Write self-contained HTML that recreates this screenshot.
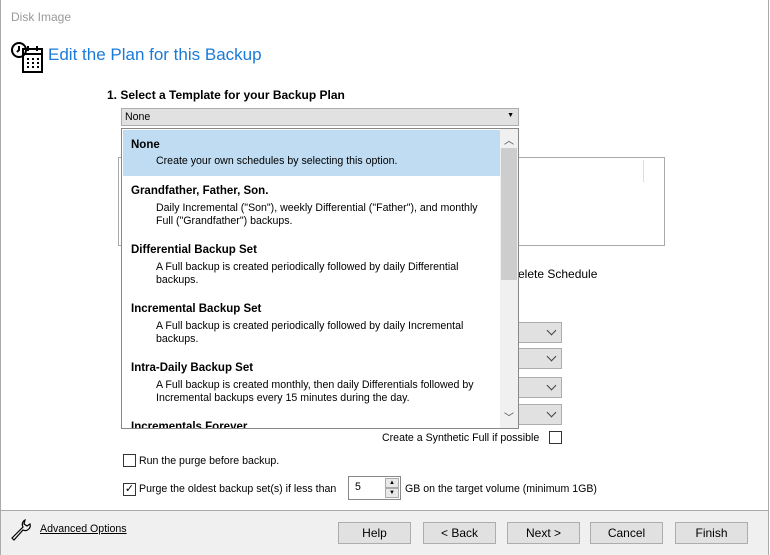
<!DOCTYPE html>
<html><head><style>
*{margin:0;padding:0;box-sizing:border-box}
body{width:770px;height:555px;background:#fff;font-family:"Liberation Sans",sans-serif;font-size:10.6px;color:#000;position:relative;overflow:hidden}
.a{position:absolute;white-space:nowrap}
.cb{position:absolute;background:#e1e1e1;border:1px solid #adadad}
.chev{position:absolute;right:6px;top:4px;width:7px;height:7px;border-right:1px solid #444;border-bottom:1px solid #444;transform:rotate(45deg)}
.btn{position:absolute;top:522px;width:73px;height:22px;background:#e1e1e1;border:1px solid #adadad;text-align:center;line-height:20px;font-size:12px}
.chk{position:absolute;width:13px;height:13px;border:1px solid #333;background:#fff}
.t{font-weight:bold;font-size:11.5px}
</style></head><body>
<div class="a" style="left:0;top:0;width:1px;height:555px;background:#aaa"></div>
<div class="a" style="left:768px;top:0;width:1px;height:555px;background:#aaa"></div>
<div class="a" style="left:11px;top:10px;color:#999;font-size:12px">Disk Image</div>
<svg class="a" style="left:10px;top:40px" width="34" height="34" viewBox="0 0 34 34" fill="none" stroke="#000" stroke-width="2"><circle cx="9" cy="10" r="7"/><path d="M9 6v4l-2 2"/><rect x="13" y="9" width="19" height="23"/><path d="M13 14h19M18 6v5M27 6v5"/><path d="M17 19h2M22 19h2M27 19h2M17 23h2M22 23h2M27 23h2M17 27h2M22 27h2M27 27h2"/></svg>
<div class="a" style="left:48px;top:45px;font-size:17px;color:#1a7ad8">Edit the Plan for this Backup</div>
<div class="a" style="left:107px;top:88px;font-weight:bold;font-size:12px">1. Select a Template for your Backup Plan</div>
<div class="cb" style="left:121px;top:108px;width:398px;height:18px"><span class="a" style="left:3px;top:2px">None</span><span class="a" style="right:4px;top:3px;font-size:7px">▼</span></div>
<div class="a" style="left:118px;top:157px;width:547px;height:89px;border:1px solid #aaa"></div>
<div class="a" style="left:643px;top:160px;width:1px;height:22px;background:#ddd"></div>
<div class="a" style="left:518px;top:267px;font-size:12px">elete Schedule</div>
<div class="cb" style="left:515px;top:322px;width:47px;height:21px"><div class="chev"></div></div>
<div class="cb" style="left:515px;top:348px;width:47px;height:21px"><div class="chev"></div></div>
<div class="cb" style="left:515px;top:377px;width:47px;height:21px"><div class="chev"></div></div>
<div class="cb" style="left:515px;top:404px;width:47px;height:21px"><div class="chev"></div></div>
<div class="a" style="left:121px;top:128px;width:398px;height:301px;border:1px solid #888;background:#fff;overflow:hidden">
<div class="a" style="left:1px;top:1px;width:377px;height:46px;background:#bfdcf2"></div>
<div class="a" style="left:378px;top:0;width:18px;height:299px;background:#f0f0f0"></div>
<div class="a" style="left:379px;top:19px;width:16px;height:132px;background:#cdcdcd"></div>
<div class="a" style="left:382px;top:3px;font-size:10px;color:#444">︿</div>
<div class="a" style="left:382px;top:280px;font-size:10px;color:#444">﹀</div>
<div class="a t" style="left:9px;top:10px">None</div>
<div class="a" style="left:34px;top:26px">Create your own schedules by selecting this option.</div>
<div class="a t" style="left:9px;top:56px">Grandfather, Father, Son.</div>
<div class="a" style="left:34px;top:73px;line-height:13px">Daily Incremental ("Son"), weekly Differential ("Father"), and monthly<br>Full ("Grandfather") backups.</div>
<div class="a t" style="left:9px;top:115px">Differential Backup Set</div>
<div class="a" style="left:34px;top:132px;line-height:13px">A Full backup is created periodically followed by daily Differential<br>backups.</div>
<div class="a t" style="left:9px;top:174px">Incremental Backup Set</div>
<div class="a" style="left:34px;top:191px;line-height:13px">A Full backup is created periodically followed by daily Incremental<br>backups.</div>
<div class="a t" style="left:9px;top:233px">Intra-Daily Backup Set</div>
<div class="a" style="left:34px;top:250px;line-height:13px">A Full backup is created monthly, then daily Differentials followed by<br>Incremental backups every 15 minutes during the day.</div>
<div class="a t" style="left:9px;top:292px">Incrementals Forever</div>
</div>
<div class="a" style="left:382px;top:432px">Create a Synthetic Full if possible</div>
<div class="chk" style="left:549px;top:431px"></div>
<div class="chk" style="left:123px;top:454px"></div>
<div class="a" style="left:139px;top:455px">Run the purge before backup.</div>
<div class="chk" style="left:123px;top:483px;font-size:11px;line-height:10px;text-align:center">✓</div>
<div class="a" style="left:139px;top:483px">Purge the oldest backup set(s) if less than</div>
<div class="a" style="left:348px;top:476px;width:53px;height:24px;border:1px solid #888;background:#fff"><span class="a" style="left:6px;top:4px">5</span>
<div class="a" style="left:36px;top:1px;width:14px;height:10px;background:#e8e8e8;border:1px solid #aaa;font-size:6px;text-align:center;line-height:8px">▲</div>
<div class="a" style="left:36px;top:11px;width:14px;height:10px;background:#e8e8e8;border:1px solid #aaa;font-size:6px;text-align:center;line-height:8px">▼</div></div>
<div class="a" style="left:405px;top:483px">GB on the target volume (minimum 1GB)</div>
<div class="a" style="left:1px;top:510px;width:767px;height:45px;background:#f0f0f0;border-top:1px solid #aaa"></div>
<svg class="a" style="left:9px;top:517px" width="26" height="24" viewBox="0 0 26 24" fill="none" stroke="#000" stroke-width="1.2"><path d="M3 21l11-11a5 5 0 0 1 2-7l-1 4 3 2 3-2a5 5 0 0 1-7 6L5 23z"/></svg>
<div class="a" style="left:40px;top:523px;text-decoration:underline">Advanced Options</div>
<div class="btn" style="left:338px">Help</div>
<div class="btn" style="left:423px">&lt; Back</div>
<div class="btn" style="left:507px">Next &gt;</div>
<div class="btn" style="left:590px">Cancel</div>
<div class="btn" style="left:675px">Finish</div>
</body></html>
